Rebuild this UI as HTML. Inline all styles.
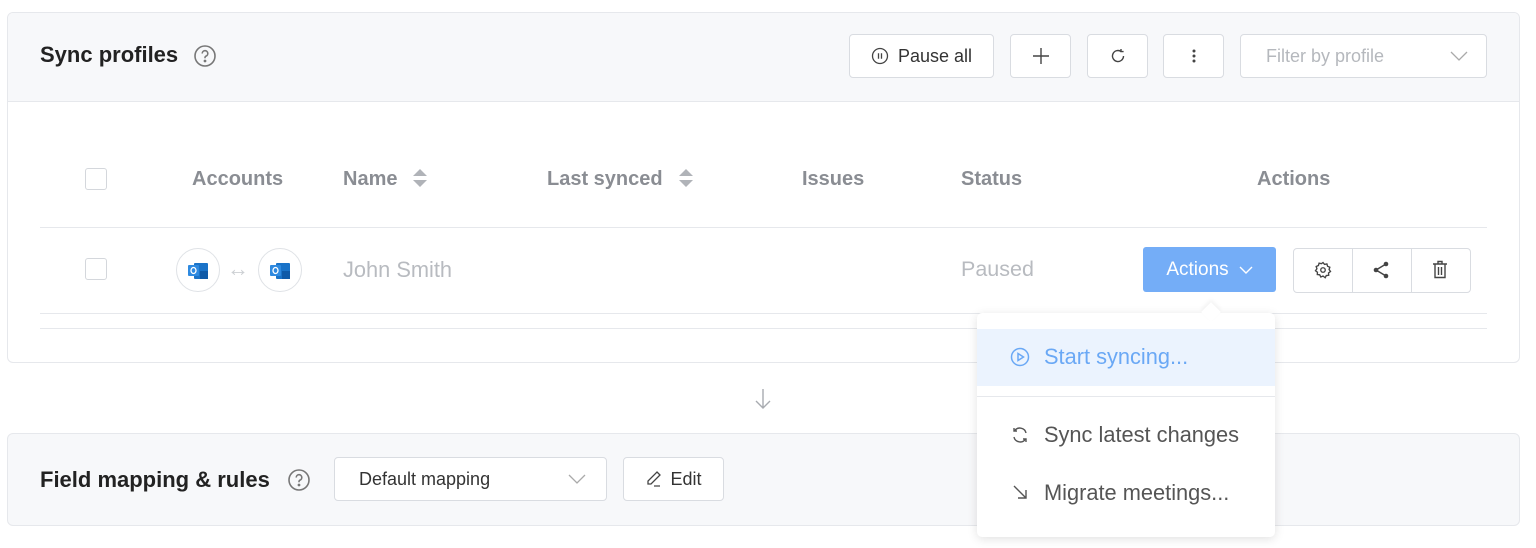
<!DOCTYPE html>
<html><head><meta charset="utf-8"><style>
*{box-sizing:border-box;margin:0;padding:0}
body{width:1536px;height:548px;background:#fff;font-family:"Liberation Sans",sans-serif;position:relative;overflow:hidden}
.a{position:absolute}
.card{position:absolute;left:7px;width:1513px;border:1px solid #e6e8ec;border-radius:6px;overflow:hidden}
.btn{position:absolute;border:1px solid #d9dce1;border-radius:4px;background:#fff;display:flex;align-items:center;justify-content:center;color:#333;font-size:18px}
.th{position:absolute;top:168px;font-size:20px;font-weight:bold;color:#8a8d93}
.cb{position:absolute;left:85px;width:22px;height:22px;border:1.5px solid #d4d7dc;border-radius:3px;background:#fff}
.line{position:absolute;left:40px;width:1447px;height:1px;background:#e6e8ec}
.av{position:absolute;top:248px;width:44px;height:44px;border:1.5px solid #dfe2e6;border-radius:50%;background:#fff}
.item{position:absolute;left:1044px;font-size:21.8px;color:#555}
</style></head><body>
<div class="card" style="top:12px;height:351px">
 <div class="a" style="left:0;top:0;width:100%;height:89px;background:#f7f8fa;border-bottom:1px solid #e6e8ec"></div>
</div>
<div class="a" style="left:40px;top:42px;font-size:22px;font-weight:bold;color:#222">Sync profiles</div>
<svg class="a" style="left:193px;top:44px" width="24" height="24" viewBox="0 0 24 24" fill="none" stroke="#777" stroke-width="1.6"><circle cx="12" cy="12" r="10"/><path d="M9.2 9.5a2.8 2.8 0 1 1 3.6 2.7c-.6.3-.8.7-.8 1.4v.6"/><circle cx="12" cy="17" r=".6" fill="#777"/></svg>
<div class="btn" style="left:849px;top:34px;width:145px;height:44px"><svg width="18" height="18" viewBox="0 0 18 18" fill="none" stroke="#444" stroke-width="1.3" style="margin-right:9px"><circle cx="9" cy="9" r="7.5"/><path d="M7.5 6.2v5.6M10.5 6.2v5.6"/></svg>Pause all</div>
<div class="btn" style="left:1010px;top:34px;width:61px;height:44px"><svg width="18" height="18" viewBox="0 0 18 18" stroke="#444" stroke-width="1.4"><path d="M9 1v16M1 9h16"/></svg></div>
<div class="btn" style="left:1087px;top:34px;width:61px;height:44px"><svg width="16" height="16" viewBox="0 0 16 16" fill="none" stroke="#444" stroke-width="1.4"><path d="M13.5 8A5.5 5.5 0 1 1 11 3.4"/><path d="M11 1v2.6h2.6"/></svg></div>
<div class="btn" style="left:1163px;top:34px;width:61px;height:44px"><svg width="4" height="14" viewBox="0 0 4 14" fill="#444"><circle cx="2" cy="2" r="1.5"/><circle cx="2" cy="7" r="1.5"/><circle cx="2" cy="12" r="1.5"/></svg></div>
<div class="btn" style="left:1240px;top:34px;width:247px;height:44px;justify-content:space-between;padding:0 18px 0 25px;color:#b5b8bd">Filter by profile<svg width="18" height="10" viewBox="0 0 18 10" fill="none" stroke="#aaa" stroke-width="1.3"><path d="M1 1l8 8 8-8"/></svg></div>

<div class="cb" style="top:168px"></div>
<div class="th" style="left:192px">Accounts</div>
<div class="th" style="left:343px">Name</div>
<svg class="a" style="left:412px;top:168px" width="16" height="20" viewBox="0 0 16 20" fill="#b0b3b8"><path d="M8 1l7 7H1zM8 19l7-7H1z"/></svg>
<div class="th" style="left:547px">Last synced</div>
<svg class="a" style="left:678px;top:168px" width="16" height="20" viewBox="0 0 16 20" fill="#b0b3b8"><path d="M8 1l7 7H1zM8 19l7-7H1z"/></svg>
<div class="th" style="left:802px">Issues</div>
<div class="th" style="left:961px">Status</div>
<div class="th" style="left:1257px">Actions</div>
<div class="line" style="top:227px"></div>
<div class="cb" style="top:258px"></div>
<div class="av" style="left:176px"><svg class="a" style="left:11px;top:12px" width="21" height="20" viewBox="0 0 21 20"><rect x="6" y="2" width="14" height="16" rx="1" fill="#1a73c8"/><rect x="12" y="10" width="8" height="8" fill="#0f5aa8"/><rect x="0" y="4" width="11" height="11" rx="1" fill="#2f8ae0"/><ellipse cx="5.5" cy="9.5" rx="2.5" ry="3" fill="none" stroke="#fff" stroke-width="1.3"/></svg></div>
<div class="a" style="left:227px;top:256px;color:#cdd0d4;font-size:22px">↔</div>
<div class="av" style="left:258px"><svg class="a" style="left:11px;top:12px" width="21" height="20" viewBox="0 0 21 20"><rect x="6" y="2" width="14" height="16" rx="1" fill="#1a73c8"/><rect x="12" y="10" width="8" height="8" fill="#0f5aa8"/><rect x="0" y="4" width="11" height="11" rx="1" fill="#2f8ae0"/><ellipse cx="5.5" cy="9.5" rx="2.5" ry="3" fill="none" stroke="#fff" stroke-width="1.3"/></svg></div>
<div class="a" style="left:343px;top:257px;font-size:21.8px;color:#b8bbc0">John Smith</div>
<div class="a" style="left:961px;top:257px;font-size:21.5px;color:#b8bbc0">Paused</div>
<div class="a" style="left:1143px;top:247px;width:133px;height:45px;background:#74adf7;border-radius:3px;color:#fff;font-size:19px;display:flex;align-items:center;justify-content:center">Actions<svg width="14" height="8" viewBox="0 0 14 8" fill="none" stroke="#fff" stroke-width="1.4" style="margin-left:10px"><path d="M1 1l6 6 6-6"/></svg></div>
<div class="a" style="left:1293px;top:248px;width:178px;height:45px;border:1px solid #d9dce1;border-radius:4px;background:#fff"></div>
<div class="a" style="left:1352px;top:248px;width:1px;height:45px;background:#d9dce1"></div>
<div class="a" style="left:1411px;top:248px;width:1px;height:45px;background:#d9dce1"></div>
<svg class="a" style="left:1314px;top:261px" width="18" height="18" viewBox="0 0 24 24" fill="none" stroke="#444" stroke-width="1.8"><circle cx="12" cy="12" r="3"/><path d="M12 2l2 2.5 3.2-.6.9 3.1 3 1.3-1 3 1.9 2.7-2.6 1.9.2 3.2-3.2.3-1.5 2.9L12 20l-2.9 1.3-1.5-2.9-3.2-.3.2-3.2L2 13l1.9-2.7-1-3 3-1.3.9-3.1 3.2.6z"/></svg>
<svg class="a" style="left:1373px;top:261px" width="16" height="18" viewBox="0 0 16 18" fill="#444"><circle cx="13" cy="3" r="2.3"/><circle cx="3" cy="9" r="2.3"/><circle cx="13" cy="15" r="2.3"/><path d="M3 9L13 3M3 9l10 6" stroke="#444" stroke-width="1.5"/></svg>
<svg class="a" style="left:1432px;top:260px" width="16" height="19" viewBox="0 0 16 19" fill="none" stroke="#444" stroke-width="1.4"><path d="M1 4h14M6 4V1.5h4V4M3 4v13.5h10V4M6.5 7v8M9.5 7v8"/></svg>
<div class="line" style="top:313px"></div>
<div class="line" style="top:328px"></div>

<svg class="a" style="left:754px;top:388px" width="18" height="22" viewBox="0 0 18 22" fill="none" stroke="#a8abb0" stroke-width="1.4"><path d="M9 1v19M2 13l7 7 7-7"/></svg>

<div class="card" style="top:433px;height:93px;background:#f7f8fa"></div>
<div class="a" style="left:40px;top:467px;font-size:22px;font-weight:bold;color:#222">Field mapping &amp; rules</div>
<svg class="a" style="left:287px;top:468px" width="24" height="24" viewBox="0 0 24 24" fill="none" stroke="#777" stroke-width="1.6"><circle cx="12" cy="12" r="10"/><path d="M9.2 9.5a2.8 2.8 0 1 1 3.6 2.7c-.6.3-.8.7-.8 1.4v.6"/><circle cx="12" cy="17" r=".6" fill="#777"/></svg>
<div class="btn" style="left:334px;top:457px;width:273px;height:44px;justify-content:space-between;padding:0 20px 0 24px">Default mapping<svg width="18" height="10" viewBox="0 0 18 10" fill="none" stroke="#aaa" stroke-width="1.3"><path d="M1 1l8 8 8-8"/></svg></div>
<div class="btn" style="left:623px;top:457px;width:101px;height:44px"><svg width="18" height="18" viewBox="0 0 18 18" fill="none" stroke="#444" stroke-width="1.3" style="margin-right:7px"><path d="M12 2l3 3-9 9H3v-3zM9 16h6"/></svg>Edit</div>

<div class="a" style="left:977px;top:313px;width:298px;height:224px;background:#fff;border-radius:5px;box-shadow:0 2px 10px rgba(0,0,0,.12)"></div>
<div class="a" style="left:1204px;top:305px;width:14px;height:14px;background:#fff;transform:rotate(45deg);box-shadow:-2px -2px 4px rgba(0,0,0,.05)"></div>
<div class="a" style="left:977px;top:329px;width:298px;height:57px;background:#ebf3fe"></div>
<div class="a" style="left:977px;top:396px;width:298px;height:1px;background:#e6e8ec"></div>
<svg class="a" style="left:1010px;top:347px" width="20" height="20" viewBox="0 0 20 20" fill="none" stroke="#6aa8f5" stroke-width="1.5"><circle cx="10" cy="10" r="8.5"/><path d="M8 6.5v7l5.5-3.5z"/></svg>
<div class="item" style="top:344px;color:#6aa8f5">Start syncing...</div>
<svg class="a" style="left:1011px;top:426px" width="18" height="18" viewBox="0 0 18 18" fill="none" stroke="#555" stroke-width="1.4"><path d="M15 7A6.3 6.3 0 0 0 3.5 5M3 11a6.3 6.3 0 0 0 11.5 2"/><path d="M3 2v3h3M15 16v-3h-3"/></svg>
<div class="item" style="top:422px">Sync latest changes</div>
<svg class="a" style="left:1012px;top:484px" width="16" height="16" viewBox="0 0 16 16" fill="none" stroke="#555" stroke-width="1.4"><path d="M2 2l12 12M14 6v8H6"/></svg>
<div class="item" style="top:480px">Migrate meetings...</div>
</body></html>
